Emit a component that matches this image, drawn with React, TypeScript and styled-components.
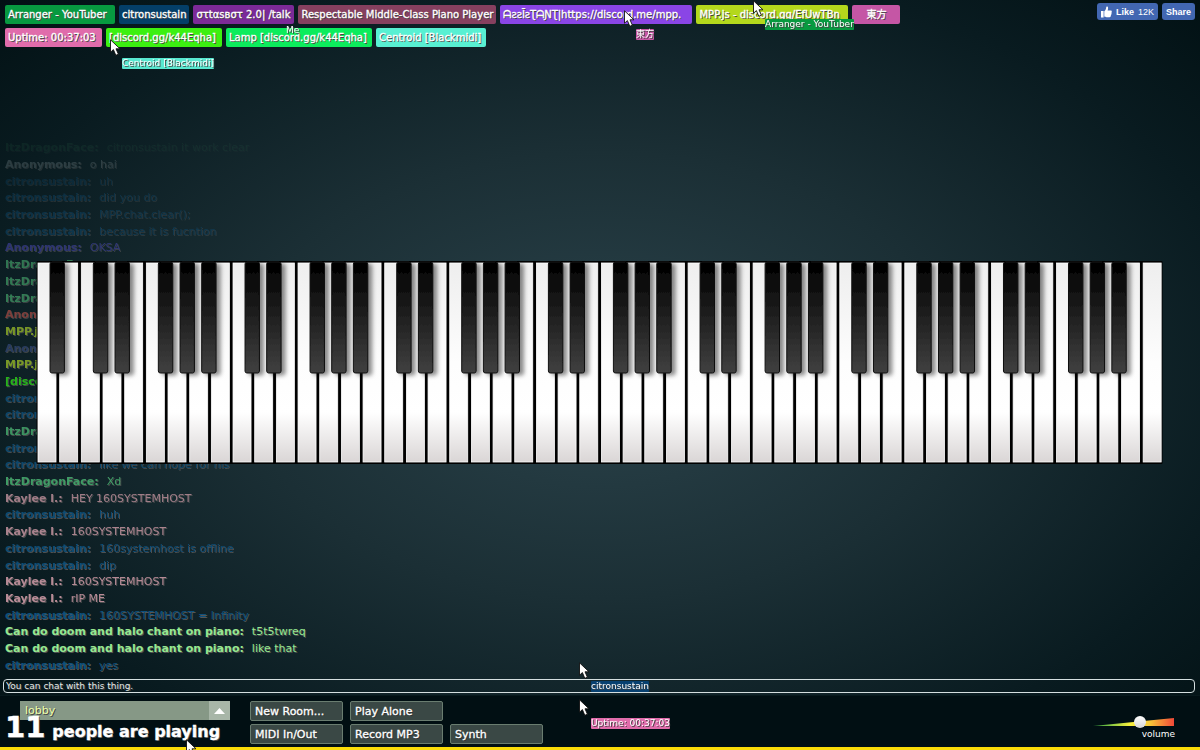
import React from "react";
import styled, { createGlobalStyle } from "styled-components";

const GlobalStyle = createGlobalStyle`
  * { box-sizing: border-box; }
  html, body { margin: 0; height: 100%; }
  body {
    font: 11px "DejaVu Sans", Verdana, "Noto Sans CJK JP", sans-serif;
    color: #fff;
    background: #001014;
  }
`;

const Page = styled.div`
  min-height: 100vh;
  display: flex;
  flex-direction: column;
  background: radial-gradient(ellipse at center, #2b434b 0%, #1b2f35 42%, #091b20 78%, #021114 100%);
`;

const TopBar = styled.header`
  display: flex;
  justify-content: space-between;
  align-items: flex-start;
  min-height: 51px;
  padding: 5px 5px 0;
`;

const Names = styled.div`
  flex: 0 1 80%;
  display: flex;
  flex-wrap: wrap;
  gap: 4px;
`;

const NameTag = styled.div<{ $color: string; $width: number; $center?: boolean }>`
  min-width: ${(p) => p.$width}px;
  height: 19px;
  padding: 0 3px;
  font-size: 10px;
  line-height: 19px;
  text-align: ${(p) => (p.$center ? "center" : "left")};
  white-space: nowrap;
  border-radius: 2px;
  background: ${(p) => p.$color};
  text-shadow: 1px 1px 0 #444;
  -webkit-text-stroke: 0.3px #fff;
`;

const Social = styled.div`
  display: flex;
  gap: 4px;
  margin-top: -2px;
`;

const SocialButton = styled.button`
  display: flex;
  align-items: center;
  gap: 4px;
  height: 17px;
  padding: 1px 4px 0;
  border: 0;
  border-radius: 3px;
  background: #4267b2;
  color: #fff;
  font: bold 9px "Liberation Sans", Arial, sans-serif;
  span { font-weight: normal; }
`;

const Stage = styled.main`
  flex: 1;
  display: grid;
  grid-template: 1fr / 1fr;
`;

const Chat = styled.ul`
  grid-area: 1 / 1;
  align-self: end;
  display: grid;
  grid-auto-rows: 1fr;
  height: 534px;
  margin: 0 0 5px;
  padding: 0 5px;
  list-style: none;
`;

const Message = styled.li<{ $color: string; $fade: number }>`
  display: flex;
  align-items: center;
  gap: 8px;
  min-height: 0;
  line-height: 16px;
  white-space: nowrap;
  color: ${(p) => p.$color};
  opacity: ${(p) => p.$fade};
  text-shadow: 1px 1px 0 #555;
`;

const Author = styled.b`
  font-weight: bold;
`;

const PianoArea = styled.div`
  grid-area: 1 / 1;
  z-index: 1;
  align-self: center;
  padding: 0 3%;
  margin-bottom: 5px;
  svg { display: block; width: 100%; height: auto; }
`;

const ChatForm = styled.form`
  display: flex;
  padding: 0 5px 0 3px;
  margin-bottom: 2px;
`;

const ChatInput = styled.input`
  flex: 1;
  height: 14px;
  padding: 0 2px;
  border: 1px solid #d5dfe0;
  border-radius: 4px;
  background: transparent;
  color: #fff;
  font: 9px "DejaVu Sans", Verdana, sans-serif;
  text-shadow: 1px 1px 0 #444;
  &::placeholder { color: #e4e9e9; opacity: 1; }
`;

const BottomBar = styled.footer`
  position: relative;
  display: flex;
  justify-content: space-between;
  height: 55px;
  padding: 5px 25px 0 20px;
  border-top: 1px solid #08191d;
  border-bottom: 3px solid #fbdc08;
  background: #010f13;
`;

const Controls = styled.div`
  display: flex;
  gap: 20px;
`;

const RoomPicker = styled.label`
  display: flex;
  width: 210px;
  height: 19px;
  background: #869886;
`;

const RoomSelect = styled.select`
  flex: 1;
  appearance: none;
  padding: 0 5px;
  border: 0;
  background: transparent;
  color: #eeffaa;
  font: 11px "DejaVu Sans", Verdana, sans-serif;
  text-shadow: 1px 1px 0 #444;
`;

const RoomArrow = styled.span`
  display: grid;
  place-items: center;
  width: 21px;
  background: #a8b6a8;
`;

const PlayerCount = styled.div`
  position: absolute;
  left: 5px;
  bottom: 0;
  display: flex;
  align-items: baseline;
  gap: 7px;
  font-size: 16px;
  font-weight: bold;
  line-height: 30px;
  white-space: nowrap;
  text-shadow: 1px 1px 0 #444;
  -webkit-text-stroke: 0.4px #fff;
  pointer-events: none;
  strong { font-size: 29px; }
`;

const Buttons = styled.div`
  display: grid;
  grid-template-columns: repeat(3, 93px);
  grid-auto-rows: 20px;
  gap: 3px 7px;
`;

const BarButton = styled.button<{ $newRow?: boolean }>`
  ${(p) => p.$newRow && "grid-column-start: 1;"}
  padding: 0 4px;
  border: 1px solid #6a7d70;
  border-radius: 2px;
  background: #3a4845;
  color: #fff;
  font: 11px "DejaVu Sans", Verdana, sans-serif;
  text-align: left;
  text-shadow: 1px 1px 0 #333;
  -webkit-text-stroke: 0.3px #fff;
`;

const Volume = styled.label`
  display: grid;
  grid-template: 14px auto / 84px;
  align-content: start;
  padding-top: 14px;
  font-size: 9px;
  text-align: right;
  svg, input { grid-area: 1 / 1; }
`;

const VolumeSlider = styled.input`
  appearance: none;
  width: 100%;
  height: 14px;
  margin: 0;
  background: transparent;
  &::-webkit-slider-thumb {
    appearance: none;
    width: 12px;
    height: 12px;
    border-radius: 50%;
    background: linear-gradient(#fff, #d4d4d4);
  }
`;

const CursorLayer = styled.div`
  position: fixed;
  inset: 0;
  z-index: 2;
  overflow: hidden;
  pointer-events: none;
`;

const Cursor = styled.div`
  position: absolute;
  svg { position: absolute; left: 0; top: 0; }
`;

const CursorName = styled.div<{ $color: string }>`
  margin: 19px 0 0 12px;
  border-radius: 1px;
  background: ${(p) => p.$color};
  font-size: 9px;
  line-height: 11px;
  white-space: nowrap;
  text-shadow: 1px 1px 0 #444;
`;

const players: { name: string; color: string; width: number; center?: boolean }[] = [
  { name: "Arranger - YouTuber", color: "#079a40", width: 110 },
  { name: "citronsustain", color: "#043f68", width: 70 },
  { name: "στtαsвστ 2.0| /talk", color: "#7c2a98", width: 101 },
  { name: "Respectable Middle-Class Piano Player", color: "#86405f", width: 198 },
  { name: "ᗩƨƨĪƨƮᗩƝƮ|https://discord.me/mpp.", color: "#8a45e6", width: 192 },
  { name: "MPP.js - discord.gg/EfUwTBn", color: "#b4d81c", width: 152 },
  { name: "東方", color: "#c556a5", width: 48, center: true },
  { name: "Uptime: 00:37:03", color: "#e06cab", width: 97 },
  { name: "[discord.gg/k44Eqha]", color: "#3cf011", width: 116 },
  { name: "Lamp [discord.gg/k44Eqha]", color: "#0cec5c", width: 146 },
  { name: "Centroid [Blackmidi]", color: "#58f0d2", width: 110 },
];

const BLUE = "#0d507c";
const GREEN = "#48b070";
const PINK = "#c896a2";
const LIME = "#96e890";

const messages: [string, string, string, number][] = [
  ["ItzDragonFace", "citronsustain it work clear", GREEN, 0.08],
  ["Anonymous", "o hai", "#6c7c80", 0.35],
  ["citronsustain", "uh", BLUE, 0.25],
  ["citronsustain", "did you do", BLUE, 0.35],
  ["citronsustain", "MPP.chat.clear();", BLUE, 0.4],
  ["citronsustain", "because it is fucntion", BLUE, 0.45],
  ["Anonymous", "OKSA", "#4444a8", 0.6],
  ["ItzDragonFace", "", GREEN, 0.6],
  ["ItzDragonFace", "", GREEN, 0.62],
  ["ItzDragonFace", "", GREEN, 0.64],
  ["Anonymous", "", "#b85048", 0.66],
  ["MPP.js", "", "#a4c828", 0.7],
  ["Anonymous", "", "#344878", 0.7],
  ["MPP.js", "", "#a4c828", 0.72],
  ["[discord.gg]", "", "#2cd818", 0.8],
  ["citronsustain", "", BLUE, 0.8],
  ["citronsustain", "", BLUE, 0.8],
  ["ItzDragonFace", "", GREEN, 0.8],
  ["citronsustain", "", BLUE, 0.82],
  ["citronsustain", "like we can hope for his", BLUE, 0.82],
  ["ItzDragonFace", "Xd", GREEN, 0.86],
  ["Kaylee l.", "HEY 160SYSTEMHOST", PINK, 0.78],
  ["citronsustain", "huh", BLUE, 0.9],
  ["Kaylee l.", "160SYSTEMHOST", PINK, 0.84],
  ["citronsustain", "160systemhost is offline", BLUE, 0.92],
  ["citronsustain", "dip", BLUE, 0.94],
  ["Kaylee l.", "160SYSTEMHOST", PINK, 0.9],
  ["Kaylee l.", "rIP ME", PINK, 0.92],
  ["citronsustain", "160SYSTEMHOST = Infinity", BLUE, 1],
  ["Can do doom and halo chant on piano", "t5t5twreq", LIME, 1],
  ["Can do doom and halo chant on piano", "like that", LIME, 1],
  ["citronsustain", "yes", BLUE, 1],
];

const cursors: { x: number; y: number; name?: string; color?: string; hidden?: boolean }[] = [
  { x: 110, y: 39, name: "Centroid [Blackmidi]", color: "#58e8d0" },
  { x: 624, y: 10, name: "東方", color: "#c556a5" },
  { x: 753, y: 0, name: "Arranger - YouTuber", color: "#079a40" },
  { x: 274, y: 6, name: "Me", color: "transparent", hidden: true },
  { x: 579, y: 662, name: "citronsustain", color: "#074070" },
  { x: 579, y: 699, name: "Uptime: 00:37:03", color: "#e06cab" },
  { x: 186, y: 739 },
];

const KEY_PITCH = 21.67;
const whiteKeys = Array.from({ length: 52 }, (_, i) => i);
// The lowest white key is an A; B and E have no black key to their right.
const blackKeys = whiteKeys.filter((i) => i < 51 && i % 7 !== 1 && i % 7 !== 4);

function Piano() {
  return (
    <PianoArea>
      <svg viewBox="0 0 1128 203" role="img" aria-label="Piano">
        <defs>
          <linearGradient id="white" x1="0" y1="0" x2="0" y2="1">
            <stop offset="0" stopColor="#eeeeee" />
            <stop offset="0.5" stopColor="#fdfdfd" />
            <stop offset="0.75" stopColor="#ffffff" />
            <stop offset="1" stopColor="#dad6d6" />
          </linearGradient>
          <linearGradient id="black" x1="0" y1="0" x2="0" y2="1">
            <stop offset="0" stopColor="#000000" />
            <stop offset="1" stopColor="#404040" />
          </linearGradient>
          <filter id="shade" x="-5%" y="-10%" width="110%" height="120%">
            <feDropShadow dx="4" dy="2" stdDeviation="2" floodColor="#000" floodOpacity="0.45" />
          </filter>
        </defs>
        <rect x="0.5" y="0" width="1126" height="203" rx="1" fill="#000" />
        {whiteKeys.map((i) => (
          <rect key={i} x={2 + i * KEY_PITCH} y="2" width="18" height="199" fill="url(#white)" stroke="#fff" strokeWidth="0.8" />
        ))}
        <g filter="url(#shade)">
          {blackKeys.map((i) => (
            <rect key={i} x={14 + i * KEY_PITCH} y="1" width="14.4" height="111" rx="2" fill="url(#black)" stroke="#111" />
          ))}
        </g>
      </svg>
    </PianoArea>
  );
}

function Pointer() {
  return (
    <svg width="13" height="18" viewBox="0 0 13 18" aria-hidden="true">
      <path d="M0.5 0.8V13.2L3.4 10.6L5.8 16.3L8.4 15.2L6 9.8H10Z" fill="#fff" stroke="#111" strokeWidth="0.9" />
    </svg>
  );
}

export default function App() {
  return (
    <Page>
      <GlobalStyle />
      <TopBar>
        <Names>
          {players.map((p) => (
            <NameTag key={p.name} $color={p.color} $width={p.width} $center={p.center}>{p.name}</NameTag>
          ))}
        </Names>
        <Social>
          <SocialButton type="button">
            <svg width="11" height="12" viewBox="0 0 11 12" aria-hidden="true">
              <path d="M0 5h2.6v6.4H0zM3.3 5.2C4.6 4.3 5.1 2.8 5.2 1.2 5.3.3 7.1.3 7.1 2.2c0 1-.3 1.8-.5 2.4h3.2c1 0 1.3 1.1.6 1.7.5.5.4 1.3-.2 1.6.3.6.1 1.2-.4 1.5.2.9-.2 1.8-1.3 1.8H5.6c-1 0-1.5-.4-2.3-.6z" fill="#fff" />
            </svg>
            Like <span>12K</span>
          </SocialButton>
          <SocialButton type="button">Share</SocialButton>
        </Social>
      </TopBar>

      <Stage>
        <Chat>
          {messages.map(([author, text, color, fade], i) => (
            <Message key={i} $color={color} $fade={fade}>
              <Author>{author}:</Author>
              {text}
            </Message>
          ))}
        </Chat>
        <Piano />
      </Stage>

      <ChatForm onSubmit={(e) => e.preventDefault()}>
        <ChatInput aria-label="Chat message" placeholder="You can chat with this thing." />
      </ChatForm>

      <BottomBar>
        <Controls>
          <RoomPicker>
            <RoomSelect aria-label="Room" defaultValue="lobby">
              <option>lobby</option>
            </RoomSelect>
            <RoomArrow>
              <svg width="13" height="6" viewBox="0 0 13 6" aria-hidden="true">
                <path d="M1 6L6.5 0L12 6Z" fill="#fff" />
              </svg>
            </RoomArrow>
          </RoomPicker>
          <Buttons>
            <BarButton type="button">New Room...</BarButton>
            <BarButton type="button">Play Alone</BarButton>
            <BarButton type="button" $newRow>MIDI In/Out</BarButton>
            <BarButton type="button">Record MP3</BarButton>
            <BarButton type="button">Synth</BarButton>
          </Buttons>
        </Controls>
        <Volume>
          <svg width="84" height="14" viewBox="0 0 84 14" aria-hidden="true">
            <defs>
              <linearGradient id="level">
                <stop offset="0" stopColor="#2f9a3c" />
                <stop offset="0.2" stopColor="#7cc244" />
                <stop offset="0.45" stopColor="#f6f03c" />
                <stop offset="0.7" stopColor="#f8c838" />
                <stop offset="1" stopColor="#f04838" />
              </linearGradient>
            </defs>
            <path d="M2 11L83 3V11Z" fill="url(#level)" />
          </svg>
          <VolumeSlider type="range" defaultValue={60} />
          <span>volume</span>
        </Volume>
        <PlayerCount>
          <strong>11</strong>
          people are playing
        </PlayerCount>
      </BottomBar>

      <CursorLayer>
        {cursors.map((c, i) => (
          <Cursor key={i} style={{ left: c.x, top: c.y }}>
            {!c.hidden && <Pointer />}
            {c.name && <CursorName $color={c.color ?? "transparent"}>{c.name}</CursorName>}
          </Cursor>
        ))}
      </CursorLayer>
    </Page>
  );
}
